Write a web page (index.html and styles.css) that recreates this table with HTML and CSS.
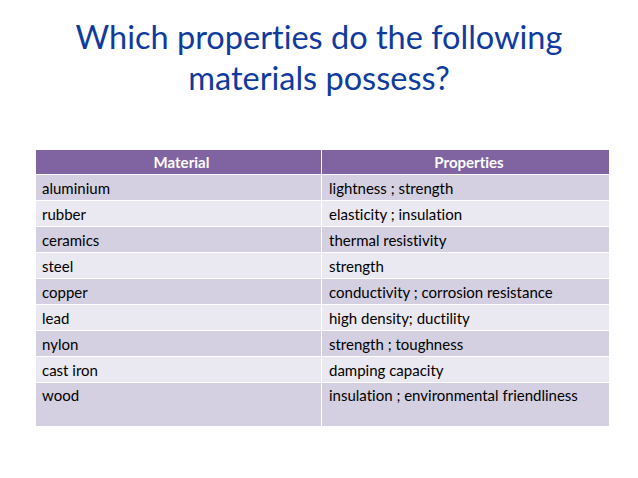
FILE: index.html
```html
<!DOCTYPE html>
<html>
<head>
<meta charset="utf-8">
<link rel="stylesheet" href="styles.css">
</head>
<body>
<div class="slide">
  <h1 class="title">Which properties do the following<br>materials possess?</h1>
  <table class="grid">
    <thead>
      <tr><th>Material</th><th>Properties</th></tr>
    </thead>
    <tbody>
      <tr class="odd"><td>aluminium</td><td>lightness ; strength</td></tr>
      <tr class="even"><td>rubber</td><td>elasticity ; insulation</td></tr>
      <tr class="odd"><td>ceramics</td><td>thermal resistivity</td></tr>
      <tr class="even"><td>steel</td><td>strength</td></tr>
      <tr class="odd"><td>copper</td><td>conductivity ; corrosion resistance</td></tr>
      <tr class="even"><td>lead</td><td>high density; ductility</td></tr>
      <tr class="odd"><td>nylon</td><td>strength ; toughness</td></tr>
      <tr class="even"><td>cast iron</td><td>damping capacity</td></tr>
      <tr class="odd tall"><td>wood</td><td>insulation ; environmental friendliness</td></tr>
    </tbody>
  </table>
</div>
</body>
</html>
```
FILE: styles.css
```css
html, body {
  margin: 0;
  padding: 0;
  background: #ffffff;
}
.slide {
  width: 638px;
  height: 478px;
  padding: 16px 0 0 36px;
  box-sizing: border-box;
  font-family: Lato, "Open Sans", sans-serif;
  font-variant-ligatures: none;
}
.title {
  margin: 0 36px 0 0;
  text-align: center;
  font-weight: 400;
  font-size: 32.5px;
  line-height: 41px;
  color: #0f3a9e;
}
.grid {
  margin-top: 52px;
  width: 573px;
  border-collapse: collapse;
  table-layout: fixed;
  font-size: 15px;
  color: #000;
}
.grid th, .grid td {
  border: 1px solid #ffffff;
  padding: 0 0 0 6px;
  height: 25px;
  text-align: left;
  vertical-align: middle;
}
.grid th:first-child, .grid td:first-child {
  width: 279px;
  border-left: none;
}
.grid th:last-child, .grid td:last-child {
  border-right: none;
  padding-left: 7px;
}
.grid th {
  background: #8064a2;
  color: #ffffff;
  font-weight: 700;
  text-align: center;
  height: 24px;
  border-top: none;
}
.odd td { background: #d4d0e1; }
.even td { background: #eae8f0; }
.tall td {
  height: 40px;
  vertical-align: top;
  padding-top: 3px;
}
.grid tbody tr:last-child td { border-bottom: none; }
```
